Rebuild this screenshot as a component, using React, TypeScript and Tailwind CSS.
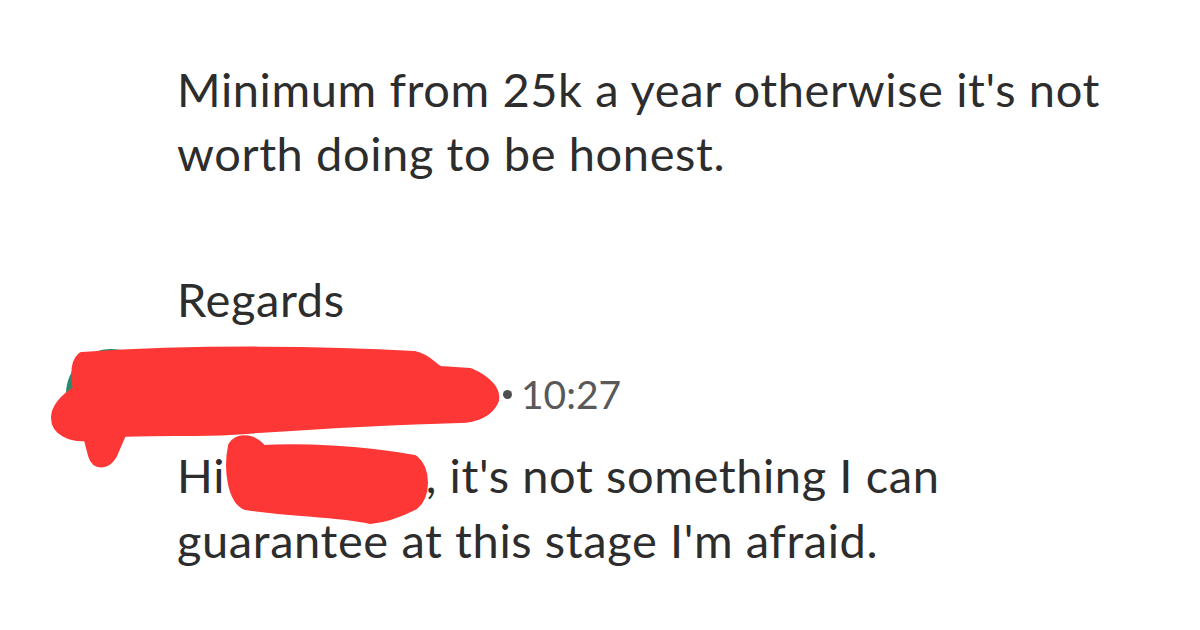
const textFont = { fontFamily: 'Lato, "Noto Sans", sans-serif' };

const Scribbles = () => (
  <svg
    className="pointer-events-none absolute inset-0"
    width="1200"
    height="630"
    viewBox="0 0 1200 630"
  >
    <g fill="#fd3636" stroke="#fd3636" strokeWidth="10" strokeLinejoin="round">
      <path d="M82 357 C200 349 330 351 414 356 C428 359 432 368 440 371 L470 373 C486 380 496 390 494 400 C489 412 475 418 460 418 C380 420 300 425 230 430 C200 432 150 430 122 432 L112 455 C106 465 96 465 93 455 L88 436 C70 438 56 430 56 418 C56 405 70 395 78 390 C75 375 76 362 82 357 Z" />
      <path d="M233 446 C240 436 255 440 262 450 C300 448 360 450 414 460 C426 470 426 495 414 505 C400 512 382 518 370 519 C340 512 290 512 246 505 C233 500 228 470 233 446 Z" />
    </g>
  </svg>
);

const App = () => {
  return (
    <div className="relative h-[630px] w-[1200px] overflow-hidden bg-white text-[#2d2d2d]" style={textFont}>
      <div className="pl-[177px] pt-[57px]">
        <p className="text-[47px] leading-[64px] tracking-[0.6px]">
          Minimum from 25k a year otherwise it's not
          <br />
          worth doing to be honest.
        </p>
        <p className="mt-[82px] text-[47px] leading-[64px] tracking-[0.6px]">Regards</p>
        <div className="mt-[18px] -ml-[111px] flex items-center">
          <div className="h-[90px] w-[90px] rounded-full bg-[#2b8a6b]" />
          <div className="ml-[30px] w-[300px] text-[30px] text-[#595959]">Recruiter</div>
          <span className="ml-[17px] mr-[9px] h-[9px] w-[9px] rounded-full bg-[#4f4f4f]" />
          <span className="text-[39px] text-[#595959]">10:27</span>
        </div>
        <p className="mt-[4px] text-[47px] leading-[65px] tracking-[0.6px]">
          Hi <span className="inline-block w-[188px]">Name</span>, it's not something I can
          <br />
          guarantee at this stage I'm afraid.
        </p>
      </div>
      <Scribbles />
    </div>
  );
};

export default App;
